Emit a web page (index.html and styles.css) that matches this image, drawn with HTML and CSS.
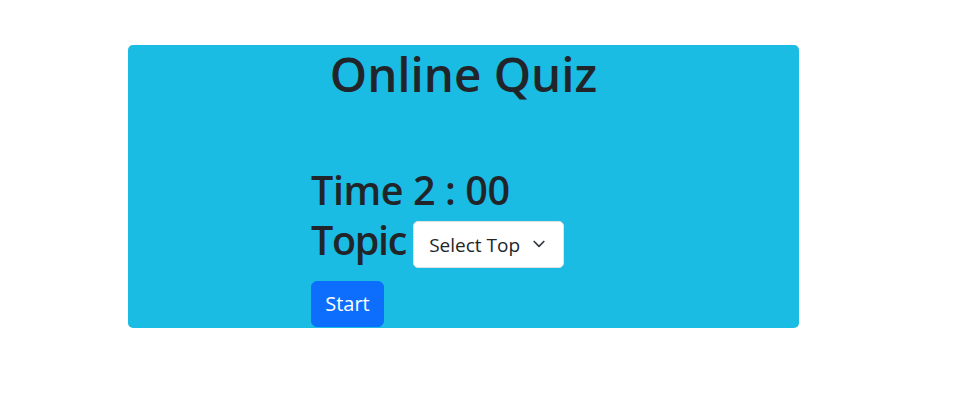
FILE: index.html
```html
<!DOCTYPE html>
<html lang="en">
<head>
<meta charset="utf-8">
<title>Online Quiz</title>
<link rel="stylesheet" href="styles.css">
</head>
<body>
  <main class="card">
    <h1 class="title">Online Quiz</h1>
    <section class="panel">
      <h1 class="time">Time 2 : 00</h1>
      <div class="topic-row">
        <h1 class="topic">Topic</h1>
        <div class="select">
          <span class="select-text">Select Top</span>
          <svg class="chevron" viewBox="0 0 12 8" width="12" height="8" aria-hidden="true">
            <path d="M1.2 1.5l4.8 4.8 4.8-4.8" fill="none" stroke="#343a40" stroke-width="1.7" stroke-linecap="round" stroke-linejoin="round"/>
          </svg>
        </div>
      </div>
      <button class="start">Start</button>
    </section>
  </main>
</body>
</html>
```

FILE: styles.css
```css
html, body {
  margin: 0;
  padding: 0;
  background: #ffffff;
}

body {
  font-family: "Open Sans", "Noto Sans", sans-serif;
  color: #212529;
}

.card {
  box-sizing: border-box;
  width: 671px;
  height: 283px;
  margin: 45px 0 0 128px;
  background: #1abce3;
  border-radius: 5px;
}

.title {
  margin: 0;
  text-align: center;
  font-size: 47.5px;
  line-height: 58px;
  font-weight: 600;
}

.panel {
  margin: 63px 0 0 183px;
  display: flex;
  flex-direction: column;
  align-items: flex-start;
}

.time, .topic {
  margin: 0;
  font-size: 39.5px;
  line-height: 48px;
  letter-spacing: -0.4px;
  font-weight: 600;
}

.topic {
  letter-spacing: -1.3px;
}

.time {
  margin-bottom: 2px;
}

.topic-row {
  display: flex;
  align-items: flex-start;
}

.select {
  box-sizing: border-box;
  margin: 4.5px 0 0 7px;
  width: 151px;
  height: 47px;
  background: #ffffff;
  border: 1px solid #dee2e6;
  border-radius: 5px;
  padding: 0 0 0 15px;
  display: flex;
  align-items: center;
  position: relative;
}

.select-text {
  display: block;
  white-space: nowrap;
  font-size: 19px;
  line-height: 30px;
  padding-top: 2px;
}

.chevron {
  position: absolute;
  left: 119px;
  top: 18px;
}

.start {
  margin-top: 13px;
  box-sizing: border-box;
  width: 73px;
  height: 46px;
  background: #0d6efd;
  color: #ffffff;
  border: 1px solid #0d6efd;
  border-radius: 6px;
  font-family: "Open Sans", "Noto Sans", sans-serif;
  font-size: 20px;
  padding: 0;
  cursor: pointer;
}
```
